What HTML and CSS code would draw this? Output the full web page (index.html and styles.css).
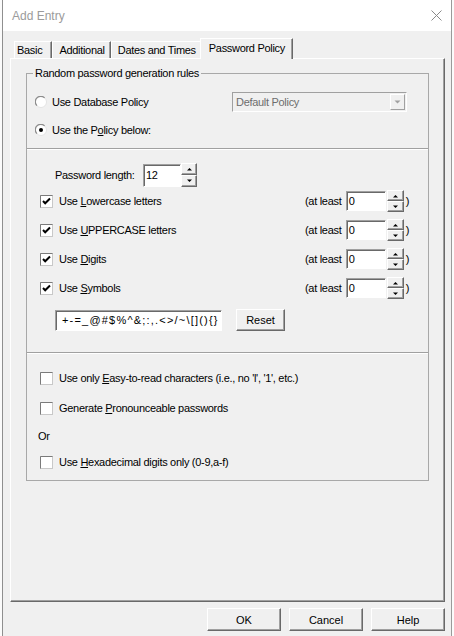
FILE: index.html
```html
<!DOCTYPE html>
<html>
<head>
<meta charset="utf-8">
<title>Add Entry</title>
<link rel="stylesheet" href="styles.css">
</head>
<body>
<div class="screen">
  <div class="edge"></div>
  <div class="dialog">
    <div class="titlebar">
      <span class="title">Add Entry</span>
      <svg class="close" width="11" height="11" viewBox="0 0 11 11"><path d="M0.5 0.5 L10.5 10.5 M10.5 0.5 L0.5 10.5" stroke="#8a8a8a" stroke-width="1" fill="none"/></svg>
    </div>
    <div class="client">
      <div class="tabs">
        <div class="tab first">Basic</div>
        <div class="tab">Additional</div>
        <div class="tab">Dates and Times</div>
        <div class="tab active">Password Policy</div>
      </div>
      <div class="panel">
        <fieldset class="group">
          <legend>Random password generation rules</legend>

          <div class="row opt-db">
            <svg class="radio" width="12" height="12" viewBox="0 0 12 12"><circle cx="6" cy="6" r="5.5" fill="#fff" stroke="#e3e3e3"/><path d="M1.9 9.6 A5 5 0 0 1 9.6 1.9" stroke="#8c8c8c" stroke-width="1.2" fill="none"/></svg>
            <span class="label">Use Database Policy</span>
            <div class="combo">
              <span class="combo-text">Default Policy</span>
              <span class="combo-btn"><svg width="7" height="4" viewBox="0 0 7 4"><polygon points="0.5,0.5 6.5,0.5 3.5,3.5" fill="#a0a0a0"/></svg></span>
            </div>
          </div>

          <div class="row opt-custom">
            <svg class="radio" width="12" height="12" viewBox="0 0 12 12"><circle cx="6" cy="6" r="5.5" fill="#fff" stroke="#e3e3e3"/><path d="M1.9 9.6 A5 5 0 0 1 9.6 1.9" stroke="#8c8c8c" stroke-width="1.2" fill="none"/><circle cx="6" cy="6" r="2" fill="#000"/></svg>
            <span class="label">Use the P<u>o</u>licy below:</span>
          </div>

          <div class="sep sep-top"></div>

          <div class="row pwlen">
            <span class="pwlen-label">Password length:</span>
            <span class="field pw-field">12</span>
            <span class="spin spin-tall">
              <span class="spin-btn"><svg width="7" height="4" viewBox="0 0 7 4"><polygon points="1,3.5 6,3.5 3.5,1" fill="#000"/></svg></span>
              <span class="spin-btn"><svg width="7" height="4" viewBox="0 0 7 4"><polygon points="1,0.5 6,0.5 3.5,3" fill="#000"/></svg></span>
            </span>
          </div>

          <div class="rules">
            <div class="row rule">
              <span class="check-label">
                <svg class="check" width="13" height="13" viewBox="0 0 13 13"><rect x="0.5" y="0.5" width="12" height="12" fill="#fff" stroke="#c8c8c8"/><path d="M0.5 12.5 V0.5 H12.5" stroke="#7a7a7a" fill="none"/><path d="M3 6 L5.2 8.3 L10 3.5" stroke="#000" stroke-width="2" fill="none"/></svg>
                <span>Use <u>L</u>owercase letters</span>
              </span>
              <span class="atleast">
                <span class="atleast-text">(at least</span>
                <span class="field min-field">0</span>
                <span class="spin spin-short">
                  <span class="spin-btn"><svg width="7" height="4" viewBox="0 0 7 4"><polygon points="1,3.5 6,3.5 3.5,1" fill="#000"/></svg></span>
                  <span class="spin-btn"><svg width="7" height="4" viewBox="0 0 7 4"><polygon points="1,0.5 6,0.5 3.5,3" fill="#000"/></svg></span>
                </span>
                <span class="paren">)</span>
              </span>
            </div>
            <div class="row rule">
              <span class="check-label">
                <svg class="check" width="13" height="13" viewBox="0 0 13 13"><rect x="0.5" y="0.5" width="12" height="12" fill="#fff" stroke="#c8c8c8"/><path d="M0.5 12.5 V0.5 H12.5" stroke="#7a7a7a" fill="none"/><path d="M3 6 L5.2 8.3 L10 3.5" stroke="#000" stroke-width="2" fill="none"/></svg>
                <span>Use <u>U</u>PPERCASE letters</span>
              </span>
              <span class="atleast">
                <span class="atleast-text">(at least</span>
                <span class="field min-field">0</span>
                <span class="spin spin-short">
                  <span class="spin-btn"><svg width="7" height="4" viewBox="0 0 7 4"><polygon points="1,3.5 6,3.5 3.5,1" fill="#000"/></svg></span>
                  <span class="spin-btn"><svg width="7" height="4" viewBox="0 0 7 4"><polygon points="1,0.5 6,0.5 3.5,3" fill="#000"/></svg></span>
                </span>
                <span class="paren">)</span>
              </span>
            </div>
            <div class="row rule">
              <span class="check-label">
                <svg class="check" width="13" height="13" viewBox="0 0 13 13"><rect x="0.5" y="0.5" width="12" height="12" fill="#fff" stroke="#c8c8c8"/><path d="M0.5 12.5 V0.5 H12.5" stroke="#7a7a7a" fill="none"/><path d="M3 6 L5.2 8.3 L10 3.5" stroke="#000" stroke-width="2" fill="none"/></svg>
                <span>Use <u>D</u>igits</span>
              </span>
              <span class="atleast">
                <span class="atleast-text">(at least</span>
                <span class="field min-field">0</span>
                <span class="spin spin-short">
                  <span class="spin-btn"><svg width="7" height="4" viewBox="0 0 7 4"><polygon points="1,3.5 6,3.5 3.5,1" fill="#000"/></svg></span>
                  <span class="spin-btn"><svg width="7" height="4" viewBox="0 0 7 4"><polygon points="1,0.5 6,0.5 3.5,3" fill="#000"/></svg></span>
                </span>
                <span class="paren">)</span>
              </span>
            </div>
            <div class="row rule">
              <span class="check-label">
                <svg class="check" width="13" height="13" viewBox="0 0 13 13"><rect x="0.5" y="0.5" width="12" height="12" fill="#fff" stroke="#c8c8c8"/><path d="M0.5 12.5 V0.5 H12.5" stroke="#7a7a7a" fill="none"/><path d="M3 6 L5.2 8.3 L10 3.5" stroke="#000" stroke-width="2" fill="none"/></svg>
                <span>Use <u>S</u>ymbols</span>
              </span>
              <span class="atleast">
                <span class="atleast-text">(at least</span>
                <span class="field min-field">0</span>
                <span class="spin spin-short">
                  <span class="spin-btn"><svg width="7" height="4" viewBox="0 0 7 4"><polygon points="1,3.5 6,3.5 3.5,1" fill="#000"/></svg></span>
                  <span class="spin-btn"><svg width="7" height="4" viewBox="0 0 7 4"><polygon points="1,0.5 6,0.5 3.5,3" fill="#000"/></svg></span>
                </span>
                <span class="paren">)</span>
              </span>
            </div>
          </div>

          <div class="row symbols">
            <span class="field sym-field">+-=_@#$%^&amp;;:,.&lt;&gt;/~\[](){}</span>
            <span class="button reset">Reset</span>
          </div>

          <div class="sep sep-bottom"></div>

          <div class="row opt easy">
            <svg class="check" width="13" height="13" viewBox="0 0 13 13"><rect x="0.5" y="0.5" width="12" height="12" fill="#fff" stroke="#c8c8c8"/><path d="M0.5 12.5 V0.5 H12.5" stroke="#7a7a7a" fill="none"/></svg>
            <span>Use only <u>E</u>asy-to-read characters (i.e., no  'l', '1', etc.)</span>
          </div>
          <div class="row opt pron">
            <svg class="check" width="13" height="13" viewBox="0 0 13 13"><rect x="0.5" y="0.5" width="12" height="12" fill="#fff" stroke="#c8c8c8"/><path d="M0.5 12.5 V0.5 H12.5" stroke="#7a7a7a" fill="none"/></svg>
            <span>Generate <u>P</u>ronounceable passwords</span>
          </div>
          <div class="row or">Or</div>
          <div class="row opt hex">
            <svg class="check" width="13" height="13" viewBox="0 0 13 13"><rect x="0.5" y="0.5" width="12" height="12" fill="#fff" stroke="#c8c8c8"/><path d="M0.5 12.5 V0.5 H12.5" stroke="#7a7a7a" fill="none"/></svg>
            <span>Use <u>H</u>exadecimal digits only (0-9,a-f)</span>
          </div>
        </fieldset>
      </div>
      <div class="buttons">
        <span class="button dlg-btn">OK</span>
        <span class="button dlg-btn">Cancel</span>
        <span class="button dlg-btn">Help</span>
      </div>
    </div>
  </div>
  <div class="edge"></div>
</div>
</body>
</html>
```

FILE: styles.css
```css
html, body {
  margin: 0;
  padding: 0;
}

body {
  width: 454px;
  height: 636px;
  overflow: hidden;
  font-family: "Liberation Sans", Arial, sans-serif;
  font-size: 11px;
  letter-spacing: -0.3px;
  color: #000;
  background: #fff;
}

.screen {
  display: flex;
  height: 636px;
}

.edge {
  width: 2px;
  background: #fbfbfb;
}

.dialog {
  width: 450px;
  box-sizing: border-box;
  border-left: 1px solid #8f8f8f;
  border-right: 1px solid #9a9a9a;
  background: #f0f0f0;
  display: flex;
  flex-direction: column;
}

/* title bar */
.titlebar {
  height: 31px;
  background: #fff;
  display: flex;
  align-items: center;
  justify-content: space-between;
  padding: 0 9px 0 9px;
  flex-shrink: 0;
}

.title {
  font-size: 12px;
  letter-spacing: 0;
  color: #9b9b9b;
}

.close {
  display: block;
}

/* client area */
.client {
  padding-left: 7px;
}

.tabs {
  display: flex;
  align-items: flex-end;
  margin: 7px 0 0 4px;
}

.tab {
  height: 17px;
  box-sizing: border-box;
  padding: 0 5px 0 6px;
  line-height: 16px;
  white-space: nowrap;
  border-top: 1px solid #fff;
  border-left: 1px solid #fff;
  border-right: 1px solid #696969;
  box-shadow: inset -1px 0 #a0a0a0;
}

.tab.first {
  padding: 0 9px 0 2px;
}

.tab.active {
  position: relative;
  z-index: 1;
  height: 21px;
  padding: 1px 7px 0 8px;
  margin: 0 -2px -1px -2px;
  background: #f0f0f0;
}

.panel {
  width: 435px;
  height: 544px;
  box-sizing: border-box;
  border-top: 1px solid #fff;
  border-left: 1px solid #fff;
  border-right: 1px solid #696969;
  border-bottom: 1px solid #696969;
  box-shadow: inset -1px -1px #a0a0a0;
  padding: 7px 0 0 15px;
}

/* group box */
.group {
  margin: 0;
  padding: 0 0 10px 0;
  width: 403px;
  min-width: 0;
  box-sizing: border-box;
  border: 1px solid #a8a8a8;
}

.group legend {
  margin-left: 6px;
  padding: 0 2px;
  line-height: 14px;
}

.row {
  display: flex;
  align-items: center;
  line-height: 13px;
  white-space: nowrap;
}

.radio, .check {
  display: block;
  flex-shrink: 0;
}

.opt-db {
  height: 20px;
  margin-top: 12px;
  padding-left: 8px;
}

.opt-custom {
  height: 20px;
  margin-top: 8px;
  padding-left: 8px;
}

.opt-db .label, .opt-custom .label {
  margin-left: 5px;
}

.combo {
  margin-left: auto;
  margin-right: 21px;
  width: 175px;
  height: 20px;
  box-sizing: border-box;
  display: flex;
  align-items: stretch;
  padding: 1px;
  border: 1px solid;
  border-color: #a0a0a0 #fff #fff #a0a0a0;
  background: #f0f0f0;
}

.combo-text {
  flex: 1;
  color: #6d6d6d;
  padding-left: 2px;
  line-height: 16px;
}

.combo-btn {
  width: 15px;
  box-sizing: border-box;
  display: flex;
  align-items: center;
  justify-content: center;
  border: 1px solid;
  border-color: #fff #a0a0a0 #a0a0a0 #fff;
  background: #f0f0f0;
}

.sep {
  border-top: 1px solid #a0a0a0;
  border-bottom: 1px solid #fff;
}

.sep-top {
  margin-top: 8px;
}

.pwlen {
  height: 24px;
  margin-top: 13px;
  padding-left: 28px;
}

.pwlen-label {
  width: 88px;
}

.field {
  box-sizing: border-box;
  background: #fff;
  border: 1px solid;
  border-color: #a0a0a0 #fff #fff #a0a0a0;
  box-shadow: inset 1px 1px #696969;
  overflow: hidden;
  white-space: nowrap;
  display: flex;
  align-items: center;
}

.pw-field {
  width: 38px;
  height: 23px;
  padding-left: 2px;
}

.spin {
  display: flex;
  flex-direction: column;
  box-sizing: border-box;
}

.spin-tall {
  width: 16px;
  height: 24px;
}

.spin-short {
  width: 17px;
  height: 22px;
  margin-left: 1px;
}

.spin-btn {
  flex: 1;
  box-sizing: border-box;
  display: flex;
  align-items: center;
  justify-content: center;
  background: #f0f0f0;
  border: 1px solid;
  border-color: #fff #696969 #696969 #fff;
  box-shadow: inset -1px -1px #a0a0a0;
}

.spin-btn svg {
  display: block;
}

.rules {
  display: flex;
  flex-direction: column;
  gap: 7px;
  margin-top: 3px;
}

.rule {
  height: 22px;
  padding-left: 13px;
}

.check-label {
  flex: 1;
  display: flex;
  align-items: center;
  gap: 6px;
}

.atleast {
  width: 104px;
  margin-right: 19px;
  display: flex;
  align-items: center;
}

.atleast-text {
  width: 41px;
}

.min-field {
  width: 40px;
  height: 20px;
  padding-left: 2px;
}

.paren {
  margin-left: 2px;
}

.symbols {
  height: 22px;
  margin-top: 10px;
  padding-left: 28px;
}

.sym-field {
  width: 167px;
  height: 21px;
  padding-left: 6px;
  letter-spacing: 1.2px;
}

.button {
  box-sizing: border-box;
  display: flex;
  align-items: center;
  justify-content: center;
  background: #f0f0f0;
  border: 1px solid;
  border-color: #fff #696969 #696969 #fff;
  box-shadow: inset -1px -1px #a0a0a0;
  letter-spacing: 0;
}

.reset {
  margin-left: 14px;
  width: 49px;
  height: 22px;
}

.sep-bottom {
  margin-top: 21px;
}

.opt {
  height: 16px;
  padding-left: 13px;
  gap: 6px;
}

.easy {
  margin-top: 16px;
}

.pron {
  margin-top: 14px;
}

.or {
  height: 16px;
  margin-top: 12px;
  padding-left: 11px;
}

.hex {
  margin-top: 10px;
}

/* dialog buttons */
.buttons {
  width: 435px;
  display: flex;
  justify-content: flex-end;
  gap: 8px;
  margin-top: 6px;
}

.dlg-btn {
  width: 74px;
  height: 23px;
}
```
